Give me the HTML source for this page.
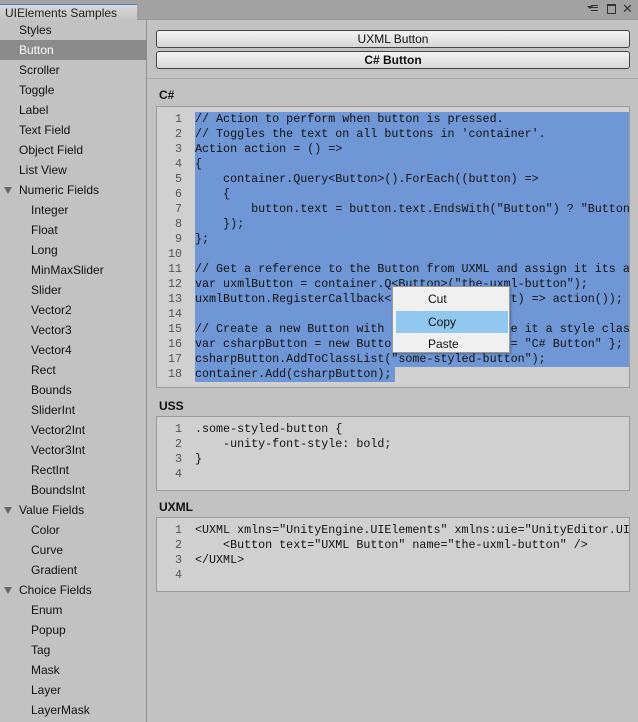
<!DOCTYPE html>
<html><head><style>
*{margin:0;padding:0;box-sizing:border-box}
body{width:638px;height:722px;overflow:hidden;background:#c2c2c2;font-family:"Liberation Sans",sans-serif;font-size:12px;color:#111;position:relative}
.abs{position:absolute}
#tabbar{left:0;top:0;width:638px;height:20px;background:#a2a2a2;border-bottom:1px solid #999}
#tab{left:0;top:4px;width:137px;height:17px;background:linear-gradient(#d8d8d8,#c2c2c2);border-top:1px solid #4a7fc8;padding-left:5px;font-size:12px;line-height:17px;color:#222}
#side{left:0;top:20px;width:147px;height:702px;border-right:1px solid #8e8e8e}
.it{position:absolute;left:0;width:147px;height:20px;line-height:20px;padding-left:19px}
.it.sub{padding-left:31px}
.it.sel{background:#8b8b8b;color:#fff}
.tri{position:absolute;left:4px;top:7px;width:0;height:0;border-left:4px solid transparent;border-right:4px solid transparent;border-top:7px solid #666}
.btn{position:absolute;left:156px;width:474px;height:18px;border:1px solid #444;border-radius:3px;background:linear-gradient(#f4f4f4,#d6d6d6);text-align:center;line-height:16px;font-size:12px}
.lbl{position:absolute;left:159px;font-weight:bold;font-size:12px}
.box{position:absolute;left:156px;width:474px;background:#d0d0d0;border:1px solid #9a9a9a;overflow:hidden}
.code{position:absolute;left:0;top:0;font-family:"Liberation Mono",monospace;font-size:11.7px;line-height:15px;white-space:pre}
.ln{position:absolute;left:0;width:25px;text-align:right;color:#555;font-family:"Liberation Mono",monospace;font-size:11.7px;line-height:15px;white-space:pre}
</style></head><body>
<div id="tabbar" class="abs"></div>
<div id="tab" class="abs">UIElements Samples</div>
<div class="abs" style="left:587px;top:6px;width:0;height:0;border-left:3px solid transparent;border-right:3px solid transparent;border-top:3px solid #333"></div>
<div class="abs" style="left:591px;top:5px;width:7px;height:6px;border-top:1px solid #333;border-bottom:1px solid #333"></div>
<div class="abs" style="left:591px;top:7px;width:7px;height:1px;background:#333"></div>
<div class="abs" style="left:607px;top:4px;width:9px;height:10px;border:1px solid #333;border-top:2px solid #333"></div>
<div class="abs" style="left:622px;top:1px;font-size:13px;color:#333">✕</div>
<div id="side" class="abs">
<div class="it" style="top:0">Styles</div>
<div class="it sel" style="top:20px">Button</div>
<div class="it" style="top:40px">Scroller</div>
<div class="it" style="top:60px">Toggle</div>
<div class="it" style="top:80px">Label</div>
<div class="it" style="top:100px">Text Field</div>
<div class="it" style="top:120px">Object Field</div>
<div class="it" style="top:140px">List View</div>
<div class="it" style="top:160px"><span class="tri"></span>Numeric Fields</div>
<div class="it sub" style="top:180px">Integer</div>
<div class="it sub" style="top:200px">Float</div>
<div class="it sub" style="top:220px">Long</div>
<div class="it sub" style="top:240px">MinMaxSlider</div>
<div class="it sub" style="top:260px">Slider</div>
<div class="it sub" style="top:280px">Vector2</div>
<div class="it sub" style="top:300px">Vector3</div>
<div class="it sub" style="top:320px">Vector4</div>
<div class="it sub" style="top:340px">Rect</div>
<div class="it sub" style="top:360px">Bounds</div>
<div class="it sub" style="top:380px">SliderInt</div>
<div class="it sub" style="top:400px">Vector2Int</div>
<div class="it sub" style="top:420px">Vector3Int</div>
<div class="it sub" style="top:440px">RectInt</div>
<div class="it sub" style="top:460px">BoundsInt</div>
<div class="it" style="top:480px"><span class="tri"></span>Value Fields</div>
<div class="it sub" style="top:500px">Color</div>
<div class="it sub" style="top:520px">Curve</div>
<div class="it sub" style="top:540px">Gradient</div>
<div class="it" style="top:560px"><span class="tri"></span>Choice Fields</div>
<div class="it sub" style="top:580px">Enum</div>
<div class="it sub" style="top:600px">Popup</div>
<div class="it sub" style="top:620px">Tag</div>
<div class="it sub" style="top:640px">Mask</div>
<div class="it sub" style="top:660px">Layer</div>
<div class="it sub" style="top:680px">LayerMask</div>
</div>
<div class="btn" style="top:30px">UXML Button</div>
<div class="btn" style="top:51px;font-weight:bold">C# Button</div>
<div class="abs" style="left:148px;top:78px;width:490px;height:1px;background:#a8a8a8"></div>
<div class="lbl" style="top:88px">C#</div>
<div class="box" style="top:106px;height:282px">
<div class="abs" style="left:38px;top:5px;width:440px;height:255px;background:#6f97d6"></div>
<div class="abs" style="left:38px;top:260px;width:200px;height:15px;background:#6f97d6"></div>
<div class="ln" style="top:5px">1
2
3
4
5
6
7
8
9
10
11
12
13
14
15
16
17
18</div>
<div class="code" style="left:38px;top:5px">// Action to perform when button is pressed.
// Toggles the text on all buttons in 'container'.
Action action = () =>
{
    container.Query&lt;Button&gt;().ForEach((button) =>
    {
        button.text = button.text.EndsWith("Button") ? "Button
    });
};

// Get a reference to the Button from UXML and assign it its a
var uxmlButton = container.Q&lt;Button&gt;("the-uxml-button");
uxmlButton.RegisterCallback&lt;MouseUpEvent&gt;((evt) => action());

// Create a new Button with an action and give it a style clas
var csharpButton = new Button(action) { text = "C# Button" };
csharpButton.AddToClassList("some-styled-button");
container.Add(csharpButton);</div>
</div>
<div class="abs" style="left:392px;top:286px;width:118px;height:67px;background:#f0f0f0;border:1px solid #999;box-shadow:1px 1px 2px rgba(0,0,0,.3)"></div>
<div class="abs" style="left:396px;top:311px;width:112px;height:22px;background:#90c8f0"></div>
<div class="abs" style="left:428px;top:292px">Cut</div>
<div class="abs" style="left:428px;top:315px">Copy</div>
<div class="abs" style="left:428px;top:337px">Paste</div>
<div class="lbl" style="top:399px">USS</div>
<div class="box" style="top:416px;height:75px">
<div class="ln" style="top:5px">1
2
3
4</div>
<div class="code" style="left:38px;top:5px">.some-styled-button {
    -unity-font-style: bold;
}</div>
</div>
<div class="lbl" style="top:500px">UXML</div>
<div class="box" style="top:517px;height:75px">
<div class="ln" style="top:5px">1
2
3
4</div>
<div class="code" style="left:38px;top:5px">&lt;UXML xmlns="UnityEngine.UIElements" xmlns:uie="UnityEditor.UI
    &lt;Button text="UXML Button" name="the-uxml-button" /&gt;
&lt;/UXML&gt;</div>
</div>
</body></html>
